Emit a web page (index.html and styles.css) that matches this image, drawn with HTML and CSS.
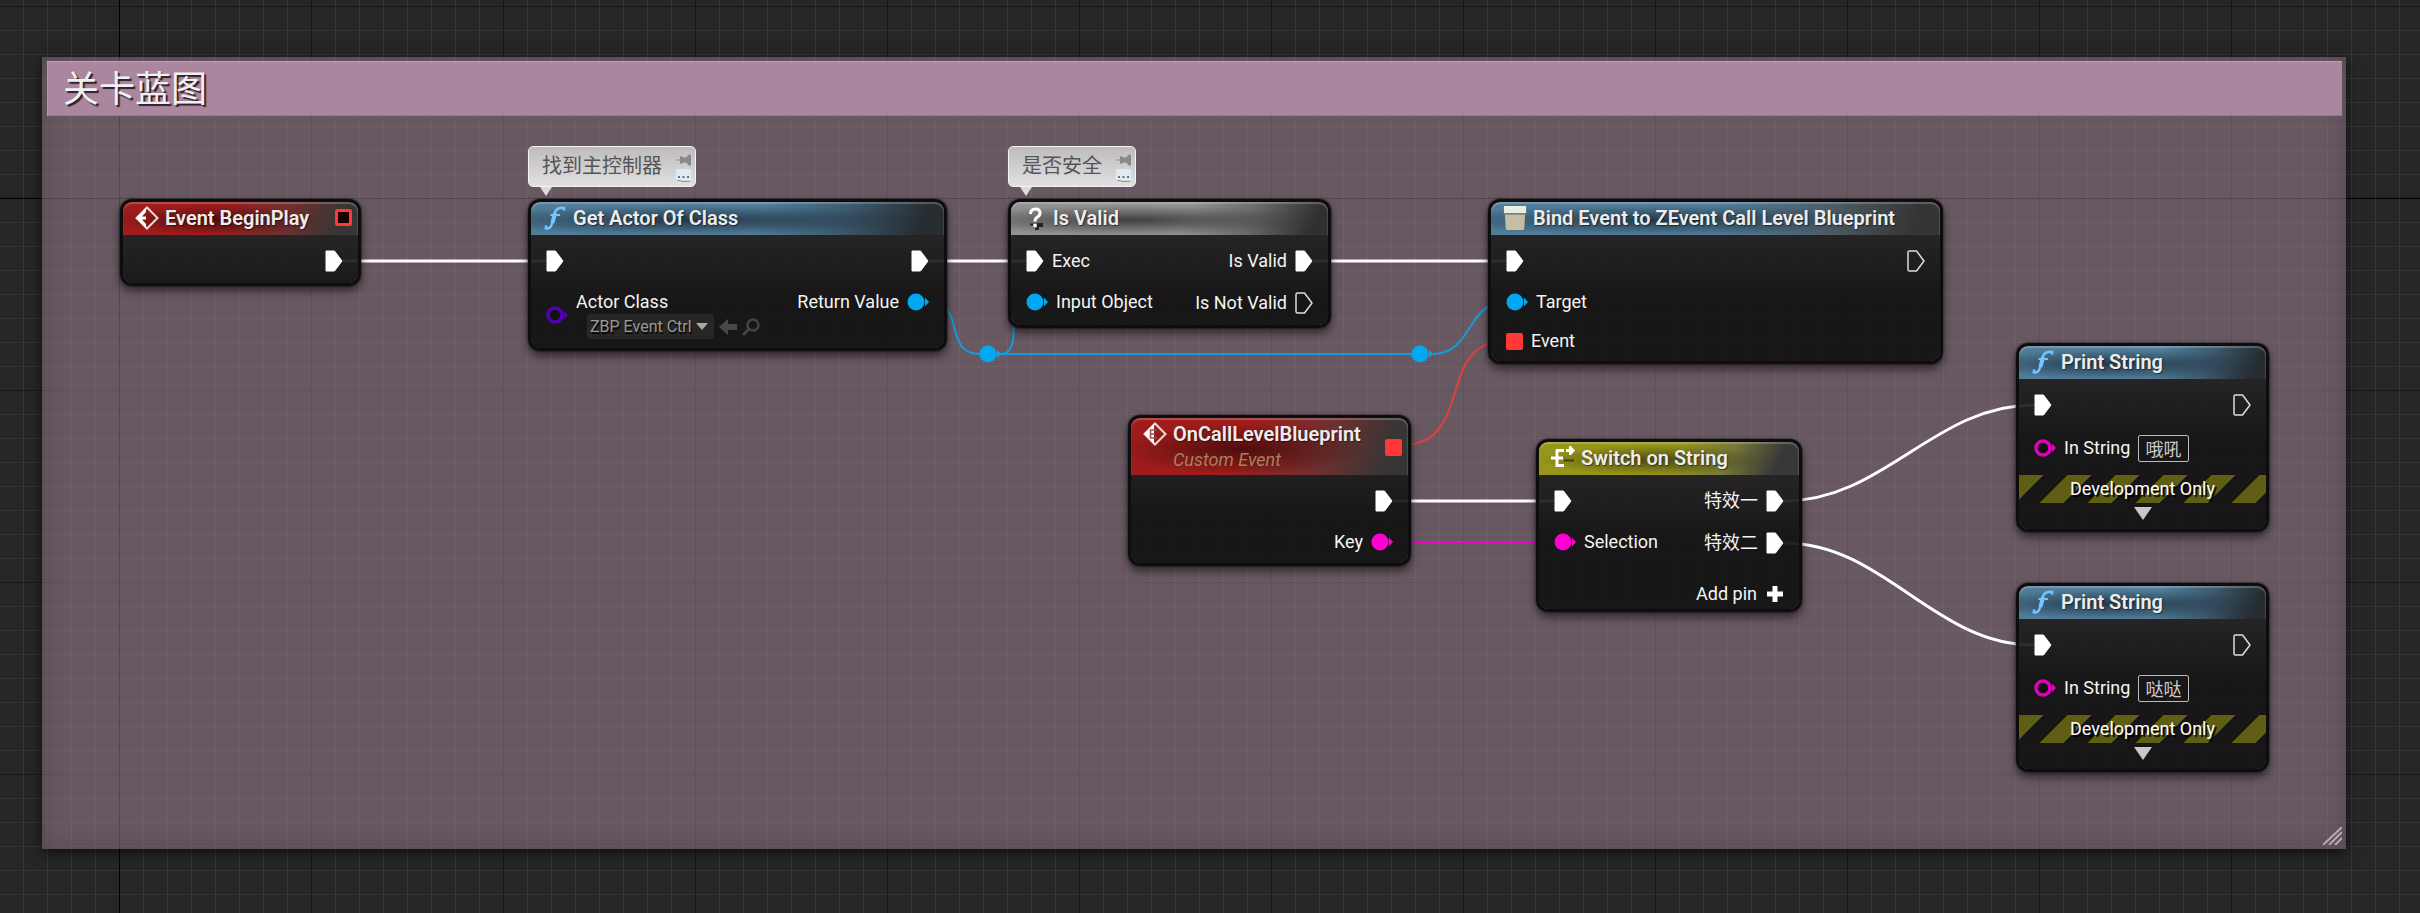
FILE: index.html
```html
<!DOCTYPE html>
<html lang="zh-CN">
<head>
    <meta charset="UTF-8">
    <meta name="viewport" content="width=device-width, initial-scale=1.0">
    <title>关卡蓝图</title>
    <link rel="stylesheet" href="styles.css">
</head>
<body>
    <!-- Shared icons -->
    <svg class="defs" aria-hidden="true">
        <symbol id="exec-on" viewBox="0 0 18 22">
            <path d="M1 1h8.500l7.500 10-7.500 10H1z" fill="#fff" stroke="#fff" stroke-linejoin="round"/>
        </symbol>
        <symbol id="exec-off" viewBox="0 0 18 22">
            <path d="M1 2.500Q1 1 2.500 1H9.500L17 11 9.500 21H2.500Q1 21 1 19.500z" fill="none" stroke="#ddd" stroke-width="1.500" stroke-linejoin="round"/>
        </symbol>
        <symbol id="dot" viewBox="0 0 22 18">
            <circle cx="9" cy="9" r="8.500" fill="currentColor"/>
            <path d="M18 4.500l4 4.500-4 4.500z" fill="currentColor"/>
        </symbol>
        <symbol id="ring" viewBox="0 0 22 18">
            <circle cx="9" cy="9" r="7" fill="#141014" stroke="currentColor" stroke-width="3.500"/>
            <path d="M18 4.500l4 4.500-4 4.500z" fill="currentColor"/>
        </symbol>
        <symbol id="func" viewBox="0 0 24 24">
            <path d="M2 22C6 23.500 8 21.500 9 17.500L11.500 7.500C12.500 3.500 15 1 21.500 2" fill="none" stroke="#76c4ff" stroke-width="2.500"/>
            <path d="M9.500 17L12 7" stroke="#76c4ff" stroke-width="4"/>
            <path d="M7.500 9h9.500" stroke="#76c4ff" stroke-width="2"/>
            <path d="M3 19.500v3.500M21 1v3.500" stroke="#76c4ff" stroke-width="2.500"/>
        </symbol>
        <symbol id="event" viewBox="0 0 24 24">
            <path d="M12 1.500L22.500 12 12 22.500 1.500 12z" fill="none" stroke="#eddcdc" stroke-width="2"/>
            <path d="M11 2L1 12l10 10v-4l-4-4.500h4v-3H7L11 6z" fill="#fff"/>
        </symbol>
        <symbol id="custom-event" viewBox="0 0 24 24">
            <path d="M12 1.500L22.500 12 12 22.500 1.500 12z" fill="none" stroke="#eddcdc" stroke-width="2"/>
            <path d="M11 2L1 12l10 10z" fill="#fff"/>
            <path d="M7.500 7.500v9M7 8h7M7 12h5M7 16h7" stroke="#8d5555" stroke-width="1.500"/>
        </symbol>
        <symbol id="bind" viewBox="0 0 24 26">
            <path d="M1 9h22l-1 15q0 2-2 2H4q-2 0-2-2z" fill="#c4bfa3"/>
            <path d="M0 0h24v8H0z" fill="#e9eee2"/>
            <path d="M1 8.500h22" stroke="#6d705f"/>
        </symbol>
        <symbol id="switch" viewBox="0 0 24 24">
            <path d="M0 12h12M6 4v17M5 4.500h8M5 19.500h8" fill="none" stroke="#fff" stroke-width="3"/>
            <path d="M15 4.500h4" stroke="#fff" stroke-width="3"/>
            <path d="M18 0h2l4 4.500-4 4.500h-2z" fill="#fff"/>
            <path d="M13 14.500h10" stroke="#403f08" stroke-width="2"/>
        </symbol>
        <symbol id="macro" viewBox="0 0 24 24">
            <path d="M7.500 8q0-5 5-5 4.500 0 4.500 4 0 2.500-2.500 4Q12 12.500 12 15.500" fill="none" stroke="#fff" stroke-width="3"/>
            <path d="M10.500 18h3v3h-3z" fill="#fff"/>
            <path d="M7 18.500h3M14 18h5v2h-4v3h-3" fill="none" stroke="#222" stroke-width="2"/>
        </symbol>
        <symbol id="pushpin" viewBox="0 0 15 12">
            <path d="M0 5.500h4V2l4 1.500h2l3-3h2v11h-2l-3-3H8L4 10V6.500H0z" fill="#888"/>
        </symbol>
        <symbol id="speech" viewBox="0 0 15 13">
            <path d="M0 0h15v11H0z" fill="#dfeaf2"/>
            <path d="M2 7h2v2H2zM6.500 7h2v2h-2zM11 7h2v2h-2z" fill="#5d7485"/>
            <path d="M1 11.500h3l2 1h8" fill="none" stroke="#8496a3"/>
        </symbol>
    </svg>

    <main class="graph">
        <section class="comment">
            <h1 class="comment-title">关卡蓝图</h1>
            <svg class="grip" viewBox="0 0 20 18"><path d="M1 18L20 0M7 18L20 5M13 18l7-7" stroke="#b8aab2" stroke-width="2"/></svg>
        </section>

        <svg class="wires">
            <g class="wire-exec">
                <path d="M343 261H546"/>
                <path d="M929 261H1026"/>
                <path d="M1313 261H1506"/>
                <path d="M1393 501H1554"/>
                <path d="M1784 501C1884 501 1934 405 2034 405"/>
                <path d="M1784 543C1884 543 1934 645 2034 645"/>
            </g>
            <g class="wire-object">
                <path d="M929 302C967 302 942 354 980 354"/>
                <path d="M1000 354C1026 354 1002 302 1026 302"/>
                <path d="M988 354H1420"/>
                <path d="M1433 354C1473 354 1466 302 1506 302"/>
            </g>
            <path class="wire-event" d="M1402 445C1475 445 1435 341 1506 341"/>
            <path class="wire-string" d="M1393 542H1554"/>
        </svg>

        <svg class="reroute reroute-a"><use href="#dot"/></svg>
        <svg class="reroute reroute-b"><use href="#dot"/></svg>

        <article class="node begin-play">
            <header class="head red">
                <svg class="icon"><use href="#event"/></svg>
                <h2>Event BeginPlay</h2>
                <span class="delegate empty"></span>
            </header>
            <div class="pins">
                <div class="col out">
                    <div class="pin exec"><svg class="p-exec"><use href="#exec-on"/></svg></div>
                </div>
            </div>
        </article>

        <article class="node get-actor">
            <div class="bubble">
                <span>找到主控制器</span>
                <div class="bubble-tools">
                    <button type="button" aria-label="Pin"><svg width="15" height="12"><use href="#pushpin"/></svg></button>
                    <button type="button" aria-label="Comment"><svg width="15" height="13"><use href="#speech"/></svg></button>
                </div>
            </div>
            <header class="head blue">
                <svg class="icon"><use href="#func"/></svg>
                <h2>Get Actor Of Class</h2>
            </header>
            <div class="pins">
                <div class="col">
                    <div class="pin exec"><svg class="p-exec"><use href="#exec-on"/></svg></div>
                    <div class="pin class-pin">
                        <svg class="p-dot class"><use href="#ring"/></svg>
                        <div>
                            <label for="actor-class">Actor Class</label>
                            <div class="picker">
                                <select id="actor-class"><option>ZBP Event Ctrl</option></select>
                                <button type="button" aria-label="Use selected"><svg width="18" height="18" viewBox="0 0 18 18"><path d="M0 9l9-8v5h9v6H9v5z" fill="#484848"/></svg></button>
                                <button type="button" aria-label="Browse"><svg width="18" height="18" viewBox="0 0 18 18"><circle cx="11" cy="7" r="5.500" fill="none" stroke="#444" stroke-width="2.500"/><path d="M7 11l-6 6" stroke="#444" stroke-width="3"/></svg></button>
                            </div>
                        </div>
                    </div>
                </div>
                <div class="col out">
                    <div class="pin exec"><svg class="p-exec"><use href="#exec-on"/></svg></div>
                    <div class="pin">Return Value<svg class="p-dot object"><use href="#dot"/></svg></div>
                </div>
            </div>
        </article>

        <article class="node is-valid">
            <div class="bubble">
                <span>是否安全</span>
                <div class="bubble-tools">
                    <button type="button" aria-label="Pin"><svg width="15" height="12"><use href="#pushpin"/></svg></button>
                    <button type="button" aria-label="Comment"><svg width="15" height="13"><use href="#speech"/></svg></button>
                </div>
            </div>
            <header class="head gray">
                <svg class="icon"><use href="#macro"/></svg>
                <h2>Is Valid</h2>
            </header>
            <div class="pins">
                <div class="col">
                    <div class="pin exec"><svg class="p-exec"><use href="#exec-on"/></svg>Exec</div>
                    <div class="pin"><svg class="p-dot object"><use href="#dot"/></svg>Input Object</div>
                </div>
                <div class="col out">
                    <div class="pin exec">Is Valid<svg class="p-exec"><use href="#exec-on"/></svg></div>
                    <div class="pin exec">Is Not Valid<svg class="p-exec"><use href="#exec-off"/></svg></div>
                </div>
            </div>
        </article>

        <article class="node bind-event">
            <header class="head steel">
                <svg class="icon"><use href="#bind"/></svg>
                <h2>Bind Event to ZEvent Call Level Blueprint</h2>
            </header>
            <div class="pins">
                <div class="col">
                    <div class="pin exec"><svg class="p-exec"><use href="#exec-on"/></svg></div>
                    <div class="pin"><svg class="p-dot object"><use href="#dot"/></svg>Target</div>
                    <div class="pin event-pin"><span class="delegate"></span>Event</div>
                </div>
                <div class="col out">
                    <div class="pin exec"><svg class="p-exec"><use href="#exec-off"/></svg></div>
                </div>
            </div>
        </article>

        <article class="node on-call">
            <header class="head red tall">
                <svg class="icon"><use href="#custom-event"/></svg>
                <div>
                    <h2>OnCallLevelBlueprint</h2>
                    <p class="subtitle">Custom Event</p>
                </div>
                <span class="delegate"></span>
            </header>
            <div class="pins">
                <div class="col out">
                    <div class="pin exec"><svg class="p-exec"><use href="#exec-on"/></svg></div>
                    <div class="pin">Key<svg class="p-dot string"><use href="#dot"/></svg></div>
                </div>
            </div>
        </article>

        <article class="node switch-string">
            <header class="head olive">
                <svg class="icon"><use href="#switch"/></svg>
                <h2>Switch on String</h2>
            </header>
            <div class="pins">
                <div class="col">
                    <div class="pin exec"><svg class="p-exec"><use href="#exec-on"/></svg></div>
                    <div class="pin"><svg class="p-dot string"><use href="#dot"/></svg>Selection</div>
                </div>
                <div class="col out">
                    <div class="pin exec">特效一<svg class="p-exec"><use href="#exec-on"/></svg></div>
                    <div class="pin exec">特效二<svg class="p-exec"><use href="#exec-on"/></svg></div>
                    <button type="button" class="add-pin">Add pin<svg width="18" height="18" viewBox="0 0 18 18"><path d="M9 1v16M1 9h16" stroke="#fff" stroke-width="5"/></svg></button>
                </div>
            </div>
        </article>

        <article class="node print print-a">
            <header class="head blue">
                <svg class="icon"><use href="#func"/></svg>
                <h2>Print String</h2>
            </header>
            <div class="pins">
                <div class="col">
                    <div class="pin exec"><svg class="p-exec"><use href="#exec-on"/></svg></div>
                    <div class="pin text-pin">
                        <svg class="p-dot string"><use href="#ring"/></svg>
                        <label for="in-string-a">In String</label>
                        <input type="text" id="in-string-a" value="哦吼">
                    </div>
                </div>
                <div class="col out">
                    <div class="pin exec"><svg class="p-exec"><use href="#exec-off"/></svg></div>
                </div>
            </div>
            <div class="dev-only">Development Only</div>
            <button type="button" class="expand" aria-label="Expand"><svg width="18" height="13" viewBox="0 0 18 13"><path d="M0 0h18L9 13z" fill="#c8c8c8"/></svg></button>
        </article>

        <article class="node print print-b">
            <header class="head blue">
                <svg class="icon"><use href="#func"/></svg>
                <h2>Print String</h2>
            </header>
            <div class="pins">
                <div class="col">
                    <div class="pin exec"><svg class="p-exec"><use href="#exec-on"/></svg></div>
                    <div class="pin text-pin">
                        <svg class="p-dot string"><use href="#ring"/></svg>
                        <label for="in-string-b">In String</label>
                        <input type="text" id="in-string-b" value="哒哒">
                    </div>
                </div>
                <div class="col out">
                    <div class="pin exec"><svg class="p-exec"><use href="#exec-off"/></svg></div>
                </div>
            </div>
            <div class="dev-only">Development Only</div>
            <button type="button" class="expand" aria-label="Expand"><svg width="18" height="13" viewBox="0 0 18 13"><path d="M0 0h18L9 13z" fill="#c8c8c8"/></svg></button>
        </article>
    </main>
</body>
</html>
```

FILE: styles.css
```css
* {
    box-sizing: border-box;
}
body {
    margin: 0;
    font-family: Roboto, "Noto Sans CJK SC", sans-serif;
    font-size: 18px;
    line-height: 24px;
    color: #f4f4f4;
    background-color: #262626;
}
h1, h2, p {
    margin: 0;
}
svg {
    display: block;
    flex: none;
}
button {
    display: block;
    padding: 0;
    border: none;
    background: none;
    font: inherit;
    color: inherit;
    cursor: pointer;
}
.defs {
    position: absolute;
    width: 0;
    height: 0;
}

/* Canvas: origin axes, major lines every 8 cells, minor cells */
.graph {
    position: relative;
    min-height: 100vh;
    overflow: hidden;
    background-image:
        linear-gradient(#000, #000),
        linear-gradient(#000, #000),
        linear-gradient(90deg, #171717 1px, transparent 1px),
        linear-gradient(#171717 1px, transparent 1px),
        linear-gradient(90deg, #353535 1px, transparent 1px),
        linear-gradient(#353535 1px, transparent 1px);
    background-size: 1px 100%, 100% 1px, 192px 192px, 192px 192px, 24px 24px, 24px 24px;
    background-position: 119px 0, 0 198px, 119px 6px, 119px 6px, 23px 6px, 23px 6px;
    background-repeat: no-repeat, no-repeat, repeat, repeat, repeat, repeat;
}

/* Comment box */
.comment {
    position: absolute;
    top: 57px;
    right: 74px;
    bottom: 64px;
    left: 42px;
    padding: 4px 4px 4px 5px;
    background-color: rgba(170, 137, 157, 0.5);
    box-shadow: inset 0 0 24px rgba(40, 25, 35, 0.3), 0 4px 12px rgba(0, 0, 0, 0.6);
}
.comment-title {
    padding: 4px 16px 0;
    font-size: 36px;
    line-height: 51px;
    font-weight: 400;
    color: #f0f0f0;
    text-shadow: 2px 2px 1px #2c2028;
    background-color: #ab879f;
    box-shadow: inset 0 1px 1px #c3a3b8, inset 1px 0 1px #b795ab, inset 0 -1px 1px #957389;
}
.grip {
    position: absolute;
    right: 4px;
    bottom: 4px;
    width: 20px;
    height: 18px;
}

/* Wires */
.wires {
    position: absolute;
    inset: 0;
    width: 100%;
    height: 100%;
    fill: none;
}
.wire-exec {
    stroke: #fff;
    stroke-width: 3;
}
.wire-object {
    stroke: #149bdc;
    stroke-width: 2;
}
.wire-event {
    stroke: #e04040;
    stroke-width: 2;
}
.wire-string {
    stroke: #ec08c6;
    stroke-width: 2;
}
.reroute {
    position: absolute;
    width: 22px;
    height: 18px;
    color: #00a8f3;
}
.reroute-a {
    left: 979px;
    top: 345px;
}
.reroute-b {
    left: 1411px;
    top: 345px;
}

/* Nodes */
.node {
    position: absolute;
    border: 3px solid #0d0d0d;
    border-radius: 12px;
    padding-bottom: 9px;
    background: linear-gradient(rgba(30, 30, 30, 0.9) 36px, rgba(17, 17, 17, 0.92) 96px) padding-box;
    box-shadow: 0 5px 10px rgba(0, 0, 0, 0.55), 0 0 2px #000;
}
.begin-play {
    left: 120px;
    top: 199px;
    width: 241px;
}
.get-actor {
    left: 528px;
    top: 199px;
    width: 419px;
}
.is-valid {
    left: 1008px;
    top: 199px;
    width: 323px;
}
.bind-event {
    left: 1488px;
    top: 199px;
    width: 455px;
}
.on-call {
    left: 1128px;
    top: 415px;
    width: 283px;
}
.switch-string {
    left: 1536px;
    top: 439px;
    width: 266px;
    padding-bottom: 3px;
}
.print {
    left: 2016px;
    width: 253px;
}
.print-a {
    top: 343px;
}
.print-b {
    top: 583px;
}

.head {
    display: flex;
    align-items: center;
    gap: 6px;
    height: 33px;
    padding: 0 6px 2px 12px;
    border-radius: 9px 9px 0 0;
    box-shadow: inset 0 2px 1px rgba(255, 255, 255, 0.22), inset -1px 0 1px rgba(255, 255, 255, 0.12);
}
.head h2 {
    font-size: 20px;
    line-height: 24px;
    font-weight: 600;
    color: #ededed;
    white-space: nowrap;
    text-shadow: 1px 1px 1px rgba(0, 0, 0, 0.5);
}
.head.tall {
    align-items: flex-start;
    height: 57px;
    padding-top: 4px;
}
.icon {
    width: 24px;
    height: 24px;
}
.subtitle {
    font-size: 18px;
    line-height: 28px;
    font-style: italic;
    color: #a58258;
}
.red {
    background:
        radial-gradient(ellipse 45% 45% at 40% 55%, rgba(50, 8, 8, 0.75), transparent),
        linear-gradient(110deg, #a01c1c 40%, #6d3030 70%, #353535 92%);
}
.blue {
    background:
        radial-gradient(ellipse 60% 45% at 38% 55%, rgba(28, 44, 56, 0.85), transparent),
        linear-gradient(115deg, #507d9b 55%, #3c5a6e 75%, #262c30 94%);
}
.steel {
    background:
        radial-gradient(ellipse 55% 45% at 38% 55%, rgba(28, 44, 56, 0.85), transparent),
        linear-gradient(105deg, #507d9b 50%, #4c5c66 75%, #343434 94%);
}
.gray {
    background:
        radial-gradient(ellipse 60% 45% at 38% 55%, rgba(50, 50, 50, 0.85), transparent),
        linear-gradient(115deg, #929292 55%, #696969 75%, #303030 94%);
}
.olive {
    background:
        radial-gradient(ellipse 45% 45% at 45% 55%, rgba(55, 55, 15, 0.8), transparent),
        linear-gradient(115deg, #96961a 50%, #77773a 72%, #38383a 90%);
}

/* Pins */
.pins {
    display: flex;
    justify-content: space-between;
    padding: 13px 15px 0;
}
.col {
    display: flex;
    flex-direction: column;
    align-items: flex-start;
    gap: 16px;
}
.col.out {
    align-items: flex-end;
    margin-left: auto;
}
.pin {
    display: flex;
    align-items: center;
    gap: 8px;
    height: 24px;
    white-space: nowrap;
}
.pin.exec {
    height: 26px;
}
.pin.event-pin {
    height: 22px;
}
.pin.text-pin {
    height: 28px;
}
.pin.class-pin {
    height: 49px;
}
.p-exec {
    width: 18px;
    height: 22px;
}
.p-dot {
    width: 22px;
    height: 18px;
}
.object {
    color: #00a8f3;
}
.string {
    color: #ff00d4;
}
.class {
    color: #5200b4;
}
.print .string {
    color: #e000bc;
}
.delegate {
    flex: none;
    width: 17px;
    height: 17px;
    border-radius: 2px;
    background-color: #ff3838;
}
.delegate.empty {
    border: 3px solid #ff3838;
    background-color: #1c0000;
}
.head .delegate {
    margin-left: auto;
}
.tall .delegate {
    align-self: center;
}

label {
    display: block;
}
.class-pin label {
    line-height: 24px;
}
.picker {
    display: flex;
    align-items: center;
    gap: 5px;
    padding-left: 11px;
}
select {
    appearance: none;
    width: 127px;
    height: 25px;
    padding: 0 0 0 3px;
    border: none;
    border-radius: 3px;
    font-family: inherit;
    font-size: 16px;
    color: #999;
    text-shadow: 1px 2px 1px #000;
    background: #272726 url("data:image/svg+xml,%3Csvg xmlns='http://www.w3.org/2000/svg' width='12' height='7'%3E%3Cpath d='M0 0h12L6 7z' fill='%23aaa'/%3E%3C/svg%3E") no-repeat 109px 9px;
}
input {
    width: 51px;
    height: 27px;
    padding: 0 6px;
    border: 1px solid #bbb;
    border-radius: 2px;
    font-family: inherit;
    font-size: 18px;
    color: #ccc;
    background: none;
}
.add-pin {
    display: flex;
    align-items: center;
    gap: 9px;
    margin-top: 10px;
}

.dev-only {
    margin-top: 13px;
    line-height: 28px;
    text-align: center;
    color: #fff;
    text-shadow: 2px 2px 1px #000;
    background: repeating-linear-gradient(135deg, #5f5e14 0 17px, transparent 17px 34px);
}
.expand {
    margin: 4px auto 0;
}

/* Node comment bubbles */
.bubble {
    position: absolute;
    left: -3px;
    top: -56px;
    display: flex;
    gap: 14px;
    height: 41px;
    padding: 4px 4px 4px 13px;
    border: 1px solid #f2f2f2;
    border-radius: 5px;
    font-size: 20px;
    line-height: 31px;
    color: #555;
    white-space: nowrap;
    background: linear-gradient(#bdbbbc, #e2e0e1);
}
.bubble::after {
    content: "";
    position: absolute;
    left: 11px;
    top: 40px;
    border: 6px solid transparent;
    border-top: 9px solid #dddadc;
    border-bottom: none;
}
.bubble-tools {
    display: flex;
    flex-direction: column;
    justify-content: space-between;
    padding: 3px 0 0;
}
```
